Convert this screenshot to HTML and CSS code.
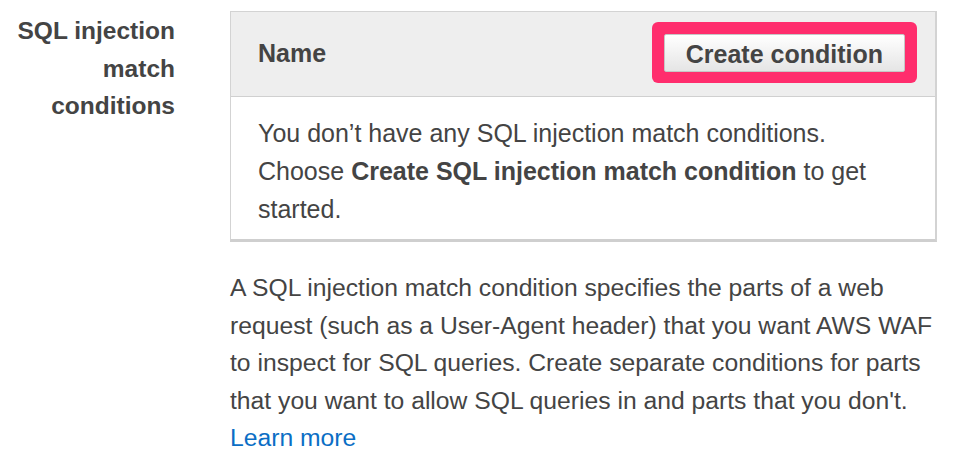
FILE: index.html
```html
<!DOCTYPE html>
<html lang="en">
<head>
<meta charset="utf-8">
<title>SQL injection match conditions</title>
<link rel="stylesheet" href="styles.css">
</head>
<body>
<div class="section">
  <div class="label">SQL injection match conditions</div>
  <div class="content">
    <div class="table">
      <div class="table-head">
        <span class="col-name">Name</span>
        <span class="highlight"><button class="btn" type="button">Create condition</button></span>
      </div>
      <div class="table-body">
        <p class="empty">You don’t have any SQL injection match conditions. Choose <b>Create SQL injection match condition</b> to get started.</p>
      </div>
    </div>
    <p class="help">A SQL injection match condition specifies the parts of a web request (such as a User-Agent header) that you want AWS WAF to inspect for SQL queries. Create separate conditions for parts that you want to allow SQL queries in and parts that you don't. <a href="#" class="link">Learn more</a></p>
  </div>
</div>
</body>
</html>
```
FILE: styles.css
```css
html, body {
  margin: 0;
  padding: 0;
  background: #fff;
}
body {
  font-family: "Liberation Sans", Arial, Helvetica, sans-serif;
  color: #444;
}
.section {
  display: grid;
  grid-template-columns: 161px 707px;
  column-gap: 55px;
  padding: 11px 0 0 14px;
}
.label {
  text-align: right;
  font-weight: bold;
  font-size: 24.5px;
  line-height: 37.5px;
  padding-top: 1px;
  color: #444;
}
.table {
  border: 1px solid #d3d3d3;
  border-right-width: 2px;
  border-bottom: 3px solid #cfcfcf;
  background: #fff;
}
.table-head {
  display: flex;
  align-items: center;
  justify-content: space-between;
  background: #eeeeee;
  border-bottom: 1px solid #d0d0d0;
  padding: 10px 18px 13px 27px;
}
.col-name {
  font-weight: bold;
  font-size: 25px;
  line-height: 30px;
}
.highlight {
  display: inline-block;
  background: #ff2d6d;
  padding: 12px 12px 11px;
  border-radius: 6px;
  line-height: 0;
}
.btn {
  box-sizing: border-box;
  height: 38px;
  padding: 3px 21px 0;
  border: 1px solid #c6c6c6;
  border-radius: 2px;
  background: linear-gradient(#ffffff, #e5e5e5);
  font-family: "Liberation Sans", Arial, Helvetica, sans-serif;
  font-weight: bold;
  font-size: 25px;
  line-height: 33px;
  color: #444;
  margin: 0;
}
.table-body {
  padding: 17px 20px 11px 27px;
}
.empty {
  margin: 0;
  font-size: 25px;
  line-height: 38px;
}
.empty b {
  font-weight: bold;
}
.help {
  margin: 27px 0 0;
  width: 720px;
  font-size: 24.7px;
  line-height: 37.5px;
}
.link {
  color: #0b6ec5;
  text-decoration: none;
}
```
